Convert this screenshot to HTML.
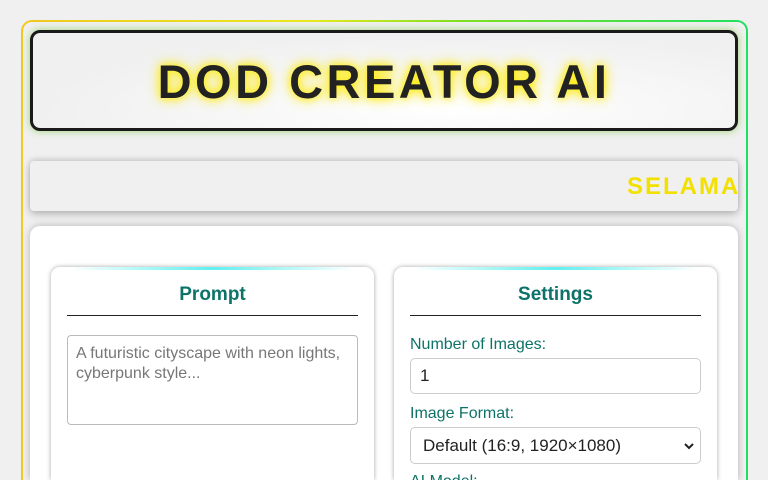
<!DOCTYPE html>
<html><head><style>
*{box-sizing:border-box;margin:0;padding:0}
html,body{width:768px;height:480px;overflow:hidden}
body{background:#f0f0f0;font-family:"Liberation Sans",sans-serif;position:relative}
.outer{position:absolute;left:21px;top:20px;width:727px;height:460px;border-radius:11px 11px 0 0;padding:2px 2px 0;background:linear-gradient(90deg,#f0c820,#e8e820 40%,#80e020 60%,#20e060)}
.outer>.in{width:100%;height:100%;background:#f0f0f0;border-radius:9px 9px 0 0}
.header{position:absolute;left:30px;top:30px;width:708px;height:101px;border:3px solid #1a1a1a;border-radius:10px;background:radial-gradient(ellipse at 60% 80%,#fff,#f0f0f0 70%);box-shadow:0 0 8px rgba(120,200,60,.7);text-align:center}
.header h1{font-size:47px;font-weight:bold;letter-spacing:3.5px;color:#222;line-height:97px;text-shadow:0 0 8px #ffee00,0 0 14px #ffe800}
.mq{position:absolute;left:30px;top:161px;width:708px;height:50px;background:#f0f0f0;border-radius:4px;box-shadow:0 3px 8px rgba(0,0,0,.25),0 -2px 6px rgba(0,0,0,.12);overflow:hidden}
.mq span{position:absolute;left:597px;top:12px;font-size:24px;font-weight:bold;letter-spacing:2px;color:#f2e000;white-space:nowrap}
.main{position:absolute;left:30px;top:226px;width:708px;height:254px;background:#fff;border-radius:10px 10px 0 0;box-shadow:0 0 8px rgba(0,0,0,.25)}
.card{position:absolute;top:267px;width:323px;height:213px;background:#fff;border-radius:9px 9px 0 0;box-shadow:0 0 5px rgba(0,0,0,.35);padding:0 16px;overflow:hidden}
.card:before{content:"";position:absolute;left:20px;right:20px;top:0;height:3px;background:linear-gradient(90deg,transparent,#60f0f0,transparent)}
.card h2{font-size:19px;color:#0d7368;text-align:center;padding-top:17px;height:49px;border-bottom:1px solid #222}
.ta{margin-top:19px;height:90px;border:1px solid #bbb;border-radius:4px;padding:8px;font-size:16px;color:#777;line-height:20px}
label{display:block;color:#0d7368;font-size:16px;margin-top:20px}
.inp{margin-top:4px;height:36px;border:1px solid #ccc;border-radius:5px;padding:0 9px;font-size:17px;line-height:34px;color:#222;position:relative}
</style></head><body>
<div class="outer"><div class="in"></div></div>
<div class="header"><h1>DOD CREATOR AI</h1></div>
<div class="mq"><span>SELAMAT DATANG</span></div>
<div class="main"></div>
<div class="card" style="left:51px"><h2>Prompt</h2><div class="ta">A futuristic cityscape with neon lights, cyberpunk style...</div></div>
<div class="card" style="left:394px"><h2>Settings</h2>
<label>Number of Images:</label><div class="inp">1</div>
<label style="margin-top:11px">Image Format:</label><div class="inp" style="padding-left:12px;height:37px;line-height:35px">Default (16:9, 1920×1080)<svg style="position:absolute;right:6px;top:14px" width="10" height="8" viewBox="0 0 10 8"><path d="M1 2l4 4 4-4" stroke="#222" stroke-width="2" fill="none"/></svg></div>
<label style="margin-top:9px">AI Model:</label></div>
</body></html>
